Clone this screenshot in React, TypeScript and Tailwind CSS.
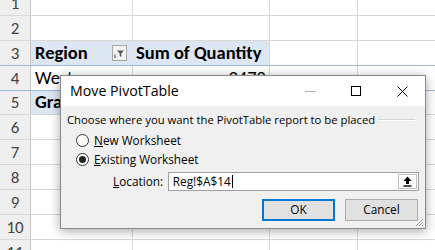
import React from "react";

const rows = [1, 2, 3, 4, 5, 6, 7, 8, 9, 10, 11];

function FilterBtn() {
  return (
    <div className="w-[15px] h-[16px] border border-[#a6a6a6] bg-[#f3f3f3] flex items-center justify-center">
      <svg width="11" height="11" viewBox="0 0 11 11">
        <path d="M3 2.5 H10 L7.3 5.5 V9 L5.7 8 V5.5 Z" fill="#555" />
        <path d="M1 6 V9.5 M0 8.5 L1 9.7 L2 8.5" stroke="#555" strokeWidth="0.9" fill="none" />
      </svg>
    </div>
  );
}

function Row({ n }: { n: number }) {
  const blue = n === 3 || n === 5;
  const bold = n === 3 || n === 5;
  let a: React.ReactNode = null;
  let b: React.ReactNode = null;
  if (n === 3) {
    a = (
      <div className="flex items-center justify-between w-full pr-[1px]">
        <span>Region</span>
        <FilterBtn />
      </div>
    );
    b = <span>Sum of Quantity</span>;
  } else if (n === 4) {
    a = <span>West</span>;
    b = <span className="ml-auto">3470</span>;
  } else if (n === 5) {
    a = <span>Grand Total</span>;
    b = <span className="ml-auto">3470</span>;
  }
  const cellBorder = blue ? "border-[#dde6f3]" : "border-[#d9d9d9]";
  return (
    <div
      className={`flex h-[25px] shrink-0 border-b ${
        n === 3 ? "border-[#9fb9de]" : "border-[#d9d9d9]"
      } ${n === 5 ? "border-t border-t-[#9fb9de] -mt-[1px]" : ""}`}
    >
      <div className="w-[31px] shrink-0 bg-[#efefef] border-r border-[#c6c6c6] flex items-center justify-center text-[17px] text-[#444] leading-none">
        {n}
      </div>
      <div
        className={`w-[102px] shrink-0 border-r ${cellBorder} ${blue ? "bg-[#dde6f3]" : ""} flex items-center px-[4px] text-[18.5px] text-black leading-none ${bold ? "font-bold" : ""}`}
      >
        {a}
      </div>
      <div
        className={`w-[137px] shrink-0 border-r border-[#d9d9d9] ${blue ? "bg-[#dde6f3]" : ""} flex items-center px-[3px] text-[18.5px] text-black leading-none whitespace-nowrap ${bold ? "font-bold" : ""}`}
      >
        {b}
      </div>
      <div className="w-[88px] shrink-0 border-r border-[#d9d9d9]" />
      <div className="flex-1" />
    </div>
  );
}

function Radio({ checked }: { checked?: boolean }) {
  return (
    <div className="w-[13px] h-[13px] rounded-full border border-[#333] bg-white flex items-center justify-center">
      {checked && <div className="w-[7px] h-[7px] rounded-full bg-[#222]" />}
    </div>
  );
}

export default function App() {
  return (
    <div
      className="relative w-[435px] h-[250px] overflow-hidden bg-white"
      style={{ fontFamily: "Calibri, Carlito, 'Open Sans', 'Liberation Sans', sans-serif" }}
    >
      <div className="flex flex-col -mt-[9px]">
        {rows.map((n) => (
          <Row key={n} n={n} />
        ))}
      </div>

      <div
        className="absolute left-[60px] top-[75px] w-[366px] h-[154px] border border-[#8a8a8a] bg-[#f0f0f0] shadow-[0_2px_10px_rgba(0,0,0,0.35)] flex flex-col"
        style={{ fontFamily: "'Segoe UI', 'Open Sans', 'Noto Sans', sans-serif" }}
      >
        <div className="h-[30px] bg-white flex items-center shrink-0">
          <span className="pl-[9px] text-[14.2px] text-black leading-none">Move PivotTable</span>
          <div className="ml-auto flex items-center h-full">
            <div className="w-[46px] h-full flex items-center justify-center">
              <div className="w-[11px] h-[1px] bg-[#b0b0b0]" />
            </div>
            <div className="w-[46px] h-full flex items-center justify-center">
              <div className="w-[10px] h-[10px] border border-black" />
            </div>
            <div className="w-[46px] h-full flex items-center justify-center">
              <svg width="11" height="11" viewBox="0 0 11 11">
                <path d="M0.5 0.5 L10.5 10.5 M10.5 0.5 L0.5 10.5" stroke="#000" strokeWidth="1" />
              </svg>
            </div>
          </div>
        </div>

        <div className="relative flex-1 flex flex-col px-[6px] pt-[6px] text-[11.3px] text-black leading-none">
          <div className="h-[16px] flex items-center">
            <span>Choose where you want the PivotTable report to be placed</span>
            <div className="flex-1 ml-[4px] mr-[4px] flex flex-col">
              <div className="h-[1px] bg-[#d5d5d5]" />
              <div className="h-[1px] bg-white" />
            </div>
          </div>
          <div className="h-[19px] mt-[3px] flex items-center pl-[9px] gap-[4px]">
            <Radio />
            <span className="ml-[1px] text-[11.8px]">
              <span className="underline">N</span>ew Worksheet
            </span>
          </div>
          <div className="h-[19px] flex items-center pl-[9px] gap-[4px]">
            <Radio checked />
            <span className="ml-[1px] text-[11.8px]">
              <span className="underline">E</span>xisting Worksheet
            </span>
          </div>
          <div className="h-[19px] mt-[3px] flex items-center">
            <span className="ml-[46px] w-[55px] text-[11.8px]">
              <span className="underline">L</span>ocation:
            </span>
            <div className="w-[252px] h-[19px] bg-white border border-[#a0a0a0] flex items-center">
              <span className="pl-[4px] text-[11.8px]">Reg!$A$14</span>
              <div className="w-[1.5px] h-[13px] bg-black ml-[1px]" />
              <div className="ml-auto mr-[1px] w-[19px] h-[15px] bg-white border border-[#c0c0c0] flex items-center justify-center">
                <svg width="9" height="11" viewBox="0 0 9 11">
                  <path d="M4.5 0.5 L8.5 5 H6 V8 H3 V5 H0.5 Z" fill="#000" />
                  <rect x="0.5" y="9.3" width="8" height="1.4" fill="#000" />
                </svg>
              </div>
            </div>
          </div>
          <div className="mt-[8px] flex items-center text-[11.8px]">
            <div className="ml-[195px] w-[73px] h-[22px] bg-[#e1e1e1] border-2 border-[#0078d7] flex items-center justify-center">
              OK
            </div>
            <div className="ml-[10px] w-[73px] h-[22px] bg-[#e1e1e1] border border-[#adadad] flex items-center justify-center">
              Cancel
            </div>
          </div>
          <svg className="absolute right-[1px] bottom-[1px]" width="10" height="10" viewBox="0 0 10 10">
            <path d="M9 2 L2 9 M9 5 L5 9 M9 8 L8 9" stroke="#a0a0a0" strokeWidth="1" />
          </svg>
        </div>
      </div>
    </div>
  );
}
